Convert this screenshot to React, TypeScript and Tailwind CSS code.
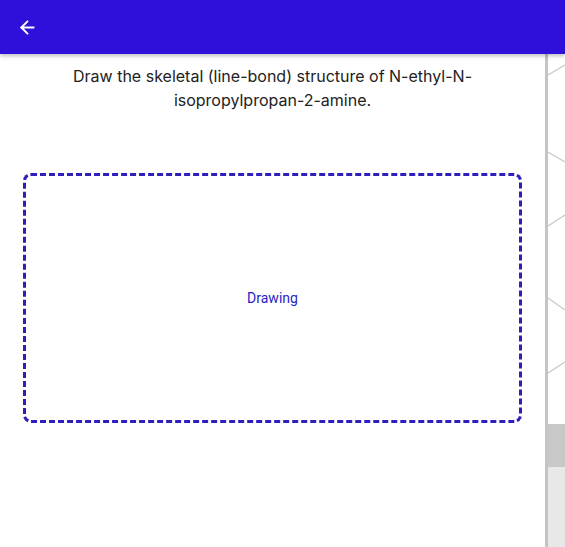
import { ArrowLeft } from "lucide-react";

// Zigzag bond segments peeking in from the side panel
const bonds = [
  { x1: 0, y1: 21, x2: 17, y2: 11 },
  { x1: 0, y1: 98, x2: 17, y2: 108 },
  { x1: 0, y1: 172, x2: 17, y2: 161 },
  { x1: 0, y1: 244, x2: 17, y2: 256 },
  { x1: 0, y1: 319, x2: 17, y2: 308 },
];

const SidePanel = () => (
  <div className="flex h-full w-[20px] shrink-0">
    <div className="w-[3px] bg-[#c4c4c4]" />
    <div className="flex flex-1 flex-col">
      <svg width="17" height="370" className="block shrink-0">
        {bonds.map((b, i) => (
          <line key={i} {...b} stroke="#c8c8c8" strokeWidth="1.3" />
        ))}
      </svg>
      <div className="h-[43px] bg-[#c8c8c8]" />
      <div className="flex-1 bg-[#e8e8e8]" />
    </div>
  </div>
);

export default function App() {
  return (
    <div className="flex h-[547px] w-[565px] flex-col overflow-hidden bg-white font-['Inter',sans-serif]">
      {/* Top bar */}
      <header className="relative z-10 flex h-[54px] shrink-0 items-center bg-[#2d10d9] px-[17px] shadow-[0_2px_4px_rgba(0,0,0,0.25)]">
        <ArrowLeft size={21} strokeWidth={2.2} className="text-white" />
      </header>

      <div className="flex min-h-0 flex-1">
        <main className="flex w-[545px] shrink-0 flex-col items-center">
          <p className="mt-[10px] w-[420px] text-center text-[16px] leading-[24px] text-[#222]">
            Draw the skeletal (line-bond) structure of N-ethyl-N-isopropylpropan-2-amine.
          </p>

          <div className="mt-[61px] flex h-[250px] w-[499px] items-center justify-center rounded-[8px] border-[3px] border-dashed border-[#2c20bd]">
            <span className="font-['Roboto',sans-serif] text-[14px] text-[#2a22c9]">Drawing</span>
          </div>
        </main>

        <SidePanel />
      </div>
    </div>
  );
}
